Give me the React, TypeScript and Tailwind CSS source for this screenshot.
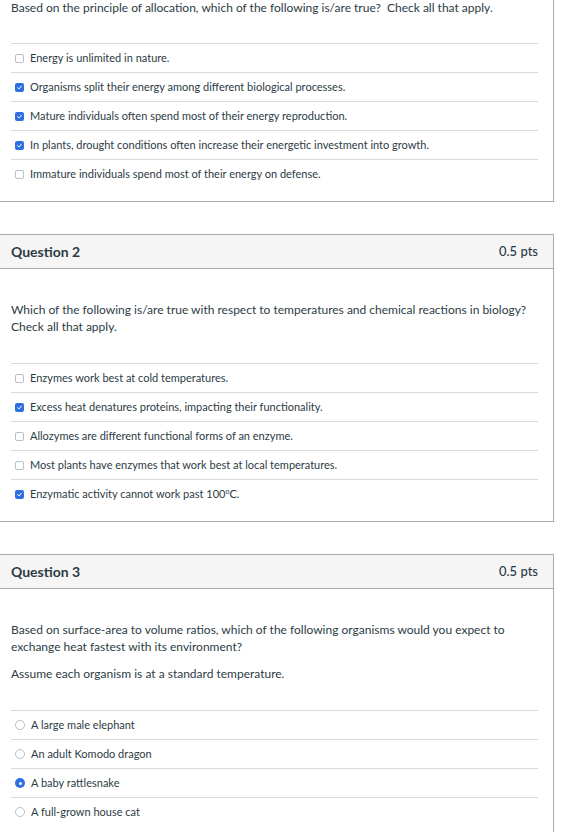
import React from 'react';

type Option = { text: React.ReactNode; checked?: boolean };

interface QuestionProps {
  title?: string;
  points?: string;
  paragraphs: React.ReactNode[];
  options: Option[];
  kind: 'checkbox' | 'radio';
  first?: boolean;
}

const Checkbox = ({ checked }: { checked?: boolean }) =>
  checked ? (
    <span className="flex h-[9px] w-[9px] shrink-0 items-center justify-center rounded-[2px] bg-[#2f6fe0]">
      <svg viewBox="0 0 10 10" className="h-[7px] w-[7px]">
        <path d="M2.2 5.2 L4.2 7.1 L7.8 3" fill="none" stroke="white" strokeWidth="1.4" strokeLinecap="round" strokeLinejoin="round" />
      </svg>
    </span>
  ) : (
    <span className="h-[9px] w-[9px] shrink-0 rounded-[2px] border border-[#b9bfc4] bg-white" />
  );

const Radio = ({ checked }: { checked?: boolean }) =>
  checked ? (
    <span className="flex h-[10px] w-[10px] shrink-0 items-center justify-center rounded-full bg-[#2f6fe0]">
      <span className="h-[3px] w-[3px] rounded-full bg-white" />
    </span>
  ) : (
    <span className="h-[10px] w-[10px] shrink-0 rounded-full border border-[#b9bfc4] bg-white" />
  );

const Question = ({ title, points, paragraphs, options, kind, first }: QuestionProps) => (
  <div
    className={
      'w-[554px] border-r border-b border-[#a9a9a9] bg-white ' +
      (first ? '-mt-[1px]' : 'mt-[32px] border-t')
    }
  >
    {title && (
      <div className="flex h-[34px] items-center justify-between border-b border-[#a9a9a9] bg-[#f5f5f5] pl-[11px] pr-[15px]">
        <span className="text-[14px] font-bold text-[#2d3b45]">{title}</span>
        <span className="text-[13px] font-medium text-[#2d3b45]">{points}</span>
      </div>
    )}
    <div className={'pl-[11px] pr-[15px] pb-[13px] ' + (first ? 'pt-0' : 'pt-[32px]')}>
      <div className="flex flex-col gap-[10px] text-[12px] leading-[17px] text-[#2d3b45]">
        {paragraphs.map((p, i) => (
          <p key={i}>{p}</p>
        ))}
      </div>
      <div className={first ? 'mt-[27px]' : 'mt-[28px]'}>
        {options.map((o, i) => (
          <div key={i} className="flex h-[29px] items-center gap-[6px] border-t border-[#d7dadd] pl-[4px] text-[11px] text-[#2d3b45]">
            {kind === 'checkbox' ? <Checkbox checked={o.checked} /> : <Radio checked={o.checked} />}
            <span>{o.text}</span>
          </div>
        ))}
      </div>
    </div>
  </div>
);

export default function App() {
  return (
    <div className="h-[832px] overflow-hidden bg-white" style={{ fontFamily: 'Lato, "Open Sans", sans-serif' }}>
      <Question
        first
        kind="checkbox"
        paragraphs={['Based on the principle of allocation, which of the following is/are true?\u00a0 Check all that apply.']}
        options={[
          { text: 'Energy is unlimited in nature.' },
          { text: 'Organisms split their energy among different biological processes.', checked: true },
          { text: 'Mature individuals often spend most of their energy reproduction.', checked: true },
          { text: 'In plants, drought conditions often increase their energetic investment into growth.', checked: true },
          { text: 'Immature individuals spend most of their energy on defense.' },
        ]}
      />
      <Question
        title="Question 2"
        points="0.5 pts"
        kind="checkbox"
        paragraphs={[
          'Which of the following is/are true with respect to temperatures and chemical reactions in biology? Check all that apply.',
        ]}
        options={[
          { text: 'Enzymes work best at cold temperatures.' },
          { text: 'Excess heat denatures proteins, impacting their functionality.', checked: true },
          { text: 'Allozymes are different functional forms of an enzyme.' },
          { text: 'Most plants have enzymes that work best at local temperatures.' },
          {
            text: (
              <>
                Enzymatic activity cannot work past 100<sup className="text-[7px]">o</sup>C.
              </>
            ),
            checked: true,
          },
        ]}
      />
      <Question
        title="Question 3"
        points="0.5 pts"
        kind="radio"
        paragraphs={[
          'Based on surface-area to volume ratios, which of the following organisms would you expect to exchange heat fastest with its environment?',
          'Assume each organism is at a standard temperature.',
        ]}
        options={[
          { text: 'A large male elephant' },
          { text: 'An adult Komodo dragon' },
          { text: 'A baby rattlesnake', checked: true },
          { text: 'A full-grown house cat' },
        ]}
      />
    </div>
  );
}
